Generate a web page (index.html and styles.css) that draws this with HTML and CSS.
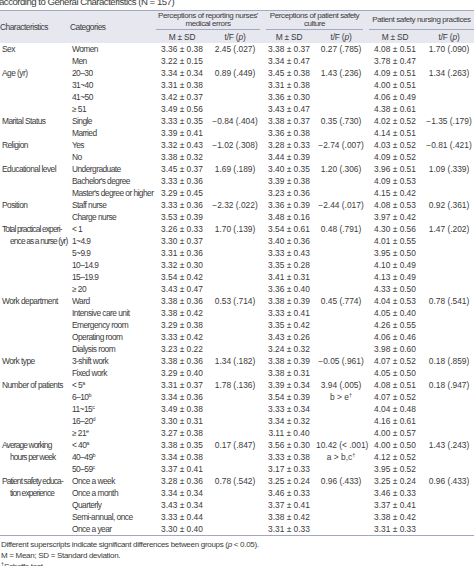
FILE: index.html
```html
<!DOCTYPE html>
<html>
<head>
<meta charset="utf-8">
<link rel="stylesheet" href="styles.css">
</head>
<body>
<p class="caption">according to General Characteristics (N = 157)</p>
<table class="stats">
  <colgroup>
    <col class="w-char"><col class="w-cat"><col class="w-m1"><col class="w-t1"><col class="w-m2"><col class="w-t2"><col class="w-m3"><col class="w-t3">
  </colgroup>
  <thead>
    <tr class="grp-row">
      <th rowspan="2" class="h-left h-char">Characteristics</th>
      <th rowspan="2" class="h-left h-cat">Categories</th>
      <th colspan="2"><div class="grp g1">Perceptions of reporting nurses'<br>medical errors</div></th>
      <th colspan="2"><div class="grp g2">Perceptions of patient safety<br>culture</div></th>
      <th colspan="2"><div class="grp g3">Patient safety nursing practices</div></th>
    </tr>
    <tr class="sub-row">
      <th>M ± SD</th><th>t/F (<i>p</i>)</th>
      <th>M ± SD</th><th>t/F (<i>p</i>)</th>
      <th>M ± SD</th><th>t/F (<i>p</i>)</th>
    </tr>
  </thead>
  <tbody>
    <tr><td rowspan="2" class="char">Sex</td><td class="cat">Women</td><td>3.36 ± 0.38</td><td>2.45 (.027)</td><td>3.38 ± 0.37</td><td>0.27 (.785)</td><td>4.08 ± 0.51</td><td>1.70 (.090)</td></tr>
    <tr><td class="cat">Men</td><td>3.22 ± 0.15</td><td></td><td>3.34 ± 0.47</td><td></td><td>3.78 ± 0.47</td><td></td></tr>

    <tr><td rowspan="4" class="char">Age (yr)</td><td class="cat">20–30</td><td>3.34 ± 0.34</td><td>0.89 (.449)</td><td>3.45 ± 0.38</td><td>1.43 (.236)</td><td>4.09 ± 0.51</td><td>1.34 (.263)</td></tr>
    <tr><td class="cat">31~40</td><td>3.31 ± 0.38</td><td></td><td>3.31 ± 0.38</td><td></td><td>4.00 ± 0.51</td><td></td></tr>
    <tr><td class="cat">41~50</td><td>3.42 ± 0.37</td><td></td><td>3.36 ± 0.30</td><td></td><td>4.06 ± 0.49</td><td></td></tr>
    <tr><td class="cat">≥ 51</td><td>3.49 ± 0.56</td><td></td><td>3.43 ± 0.47</td><td></td><td>4.38 ± 0.61</td><td></td></tr>

    <tr><td rowspan="2" class="char">Marital Status</td><td class="cat">Single</td><td>3.33 ± 0.35</td><td>−0.84 (.404)</td><td>3.38 ± 0.37</td><td>0.35 (.730)</td><td>4.02 ± 0.52</td><td>−1.35 (.179)</td></tr>
    <tr><td class="cat">Married</td><td>3.39 ± 0.41</td><td></td><td>3.36 ± 0.38</td><td></td><td>4.14 ± 0.51</td><td></td></tr>

    <tr><td rowspan="2" class="char">Religion</td><td class="cat">Yes</td><td>3.32 ± 0.43</td><td>−1.02 (.308)</td><td>3.28 ± 0.33</td><td>−2.74 (.007)</td><td>4.03 ± 0.52</td><td>−0.81 (.421)</td></tr>
    <tr><td class="cat">No</td><td>3.38 ± 0.32</td><td></td><td>3.44 ± 0.39</td><td></td><td>4.09 ± 0.52</td><td></td></tr>

    <tr><td rowspan="3" class="char">Educational level</td><td class="cat">Undergraduate</td><td>3.45 ± 0.37</td><td>1.69 (.189)</td><td>3.40 ± 0.35</td><td>1.20 (.306)</td><td>3.96 ± 0.51</td><td>1.09 (.339)</td></tr>
    <tr><td class="cat">Bachelor's degree</td><td>3.33 ± 0.36</td><td></td><td>3.39 ± 0.38</td><td></td><td>4.09 ± 0.53</td><td></td></tr>
    <tr><td class="cat">Master's degree or higher</td><td>3.29 ± 0.45</td><td></td><td>3.23 ± 0.36</td><td></td><td>4.15 ± 0.42</td><td></td></tr>

    <tr><td rowspan="2" class="char">Position</td><td class="cat">Staff nurse</td><td>3.33 ± 0.36</td><td>−2.32 (.022)</td><td>3.36 ± 0.39</td><td>−2.44 (.017)</td><td>4.08 ± 0.53</td><td>0.92 (.361)</td></tr>
    <tr><td class="cat">Charge nurse</td><td>3.53 ± 0.39</td><td></td><td>3.48 ± 0.16</td><td></td><td>3.97 ± 0.42</td><td></td></tr>

    <tr><td rowspan="6" class="char hang">Total practical experi-<br>ence as a nurse (yr)</td><td class="cat">&lt; 1</td><td>3.26 ± 0.33</td><td>1.70 (.139)</td><td>3.54 ± 0.61</td><td>0.48 (.791)</td><td>4.30 ± 0.56</td><td>1.47 (.202)</td></tr>
    <tr><td class="cat">1~4.9</td><td>3.30 ± 0.37</td><td></td><td>3.40 ± 0.36</td><td></td><td>4.01 ± 0.55</td><td></td></tr>
    <tr><td class="cat">5~9.9</td><td>3.31 ± 0.36</td><td></td><td>3.33 ± 0.43</td><td></td><td>3.95 ± 0.50</td><td></td></tr>
    <tr><td class="cat">10–14.9</td><td>3.32 ± 0.30</td><td></td><td>3.35 ± 0.28</td><td></td><td>4.10 ± 0.49</td><td></td></tr>
    <tr><td class="cat">15–19.9</td><td>3.54 ± 0.42</td><td></td><td>3.41 ± 0.31</td><td></td><td>4.13 ± 0.49</td><td></td></tr>
    <tr><td class="cat">≥ 20</td><td>3.43 ± 0.47</td><td></td><td>3.36 ± 0.40</td><td></td><td>4.33 ± 0.50</td><td></td></tr>

    <tr><td rowspan="5" class="char">Work department</td><td class="cat">Ward</td><td>3.38 ± 0.36</td><td>0.53 (.714)</td><td>3.38 ± 0.39</td><td>0.45 (.774)</td><td>4.04 ± 0.53</td><td>0.78 (.541)</td></tr>
    <tr><td class="cat">Intensive care unit</td><td>3.38 ± 0.42</td><td></td><td>3.33 ± 0.41</td><td></td><td>4.05 ± 0.40</td><td></td></tr>
    <tr><td class="cat">Emergency room</td><td>3.29 ± 0.38</td><td></td><td>3.35 ± 0.42</td><td></td><td>4.26 ± 0.55</td><td></td></tr>
    <tr><td class="cat">Operating room</td><td>3.33 ± 0.42</td><td></td><td>3.43 ± 0.26</td><td></td><td>4.06 ± 0.46</td><td></td></tr>
    <tr><td class="cat">Dialysis room</td><td>3.23 ± 0.22</td><td></td><td>3.24 ± 0.32</td><td></td><td>3.98 ± 0.60</td><td></td></tr>

    <tr><td rowspan="2" class="char">Work type</td><td class="cat">3-shift work</td><td>3.38 ± 0.36</td><td>1.34 (.182)</td><td>3.38 ± 0.39</td><td>−0.05 (.961)</td><td>4.07 ± 0.52</td><td>0.18 (.859)</td></tr>
    <tr><td class="cat">Fixed work</td><td>3.29 ± 0.40</td><td></td><td>3.38 ± 0.31</td><td></td><td>4.05 ± 0.50</td><td></td></tr>

    <tr><td rowspan="5" class="char">Number of patients</td><td class="cat">&lt; 5<sup>a</sup></td><td>3.31 ± 0.37</td><td>1.78 (.136)</td><td>3.39 ± 0.34</td><td>3.94 (.005)</td><td>4.08 ± 0.51</td><td>0.18 (.947)</td></tr>
    <tr><td class="cat">6–10<sup>b</sup></td><td>3.34 ± 0.36</td><td></td><td>3.54 ± 0.39</td><td>b &gt; e<sup>†</sup></td><td>4.07 ± 0.52</td><td></td></tr>
    <tr><td class="cat">11~15<sup>c</sup></td><td>3.49 ± 0.38</td><td></td><td>3.33 ± 0.34</td><td></td><td>4.04 ± 0.48</td><td></td></tr>
    <tr><td class="cat">16–20<sup>d</sup></td><td>3.30 ± 0.31</td><td></td><td>3.34 ± 0.32</td><td></td><td>4.16 ± 0.61</td><td></td></tr>
    <tr><td class="cat">≥ 21<sup>e</sup></td><td>3.27 ± 0.38</td><td></td><td>3.11 ± 0.40</td><td></td><td>4.00 ± 0.57</td><td></td></tr>

    <tr><td rowspan="3" class="char hang">Average working<br>hours per week</td><td class="cat">&lt; 40<sup>a</sup></td><td>3.38 ± 0.35</td><td>0.17 (.847)</td><td>3.56 ± 0.30</td><td>10.42 (&lt; .001)</td><td>4.00 ± 0.50</td><td>1.43 (.243)</td></tr>
    <tr><td class="cat">40–49<sup>b</sup></td><td>3.34 ± 0.38</td><td></td><td>3.33 ± 0.38</td><td>a &gt; b,c<sup>†</sup></td><td>4.12 ± 0.52</td><td></td></tr>
    <tr><td class="cat">50–59<sup>c</sup></td><td>3.37 ± 0.41</td><td></td><td>3.17 ± 0.33</td><td></td><td>3.95 ± 0.52</td><td></td></tr>

    <tr><td rowspan="5" class="char hang">Patient safety educa-<br>tion experience</td><td class="cat">Once a week</td><td>3.28 ± 0.36</td><td>0.78 (.542)</td><td>3.25 ± 0.24</td><td>0.96 (.433)</td><td>3.25 ± 0.24</td><td>0.96 (.433)</td></tr>
    <tr><td class="cat">Once a month</td><td>3.34 ± 0.34</td><td></td><td>3.46 ± 0.33</td><td></td><td>3.46 ± 0.33</td><td></td></tr>
    <tr><td class="cat">Quarterly</td><td>3.43 ± 0.34</td><td></td><td>3.37 ± 0.41</td><td></td><td>3.37 ± 0.41</td><td></td></tr>
    <tr><td class="cat">Semi-annual, once</td><td>3.33 ± 0.44</td><td></td><td>3.38 ± 0.42</td><td></td><td>3.38 ± 0.42</td><td></td></tr>
    <tr><td class="cat">Once a year</td><td>3.30 ± 0.40</td><td></td><td>3.31 ± 0.33</td><td></td><td>3.31 ± 0.33</td><td></td></tr>
  </tbody>
</table>
<div class="notes">
  <p>Different superscripts indicate significant differences between groups (<i>p</i> &lt; 0.05).</p>
  <p>M = Mean; SD = Standard deviation.</p>
  <p><sup>†</sup>Scheffe test.</p>
</div>
</body>
</html>
```
FILE: styles.css
```css
html, body {
  margin: 0;
  padding: 0;
  background: #ffffff;
}
body {
  width: 474px;
  height: 566px;
  overflow: hidden;
  font-family: "Liberation Sans", Arial, sans-serif;
  font-size: 8.4px;
  color: #3b3b3b;
}
.caption {
  margin: -3px 0 3px -1px;
  height: 10px;
  line-height: 10px;
  font-size: 9.6px;
  letter-spacing: -0.5px;
  white-space: nowrap;
}
.stats {
  width: 474px;
  border-collapse: collapse;
  table-layout: fixed;
  border-top: 1px solid #a3a9c0;
  border-bottom: 1px solid #a3a9c0;
}
.w-char { width: 70px; }
.w-cat { width: 86px; }
.w-m1 { width: 52px; }
.w-t1 { width: 54px; }
.w-m2 { width: 54px; }
.w-t2 { width: 50px; }
.w-m3 { width: 58px; }
.w-t3 { width: 50px; }
.stats th {
  background: #e6e7ef;
  font-weight: normal;
  padding: 0;
  text-align: center;
  white-space: nowrap;
  letter-spacing: -0.5px;
}
.stats th.h-left {
  text-align: left;
}
.h-char { padding-left: 2px; }
.h-cat { padding-left: 2px; }
.grp-row { height: 19px; }
.sub-row { height: 13px; }
.sub-row th {
  line-height: 12px;
  vertical-align: middle;
  letter-spacing: -0.2px;
}
.grp {
  display: flex;
  align-items: center;
  justify-content: center;
  height: 16px;
  padding: 1px 0 1px;
  font-size: 8px;
  line-height: 8px;
  letter-spacing: -0.4px;
  border-bottom: 1px solid #a3a9c0;
  text-align: center;
}
.g1 { margin: 0 2px 0 0; }
.g2 { margin: 0 3px 0 4px; }
.g3 { margin: 0 0 0 3px; }
.stats td {
  height: 12px;
  line-height: 12px;
  padding: 0;
  text-align: center;
  white-space: nowrap;
}
.stats td.char {
  text-align: left;
  vertical-align: top;
  padding-left: 2px;
  letter-spacing: -0.55px;
}
.stats td.hang {
  padding-left: 10px;
  text-indent: -8px;
  letter-spacing: -0.85px;
}
.stats td.cat {
  text-align: left;
  padding-left: 2px;
  letter-spacing: -0.55px;
}
sup {
  font-size: 5.5px;
  line-height: 0;
  vertical-align: 3px;
  letter-spacing: 0;
}
.notes {
  margin-top: 3px;
  padding-left: 1px;
  line-height: 11px;
  font-size: 8px;
  letter-spacing: -0.3px;
}
.notes p {
  margin: 0;
  white-space: nowrap;
}
```
